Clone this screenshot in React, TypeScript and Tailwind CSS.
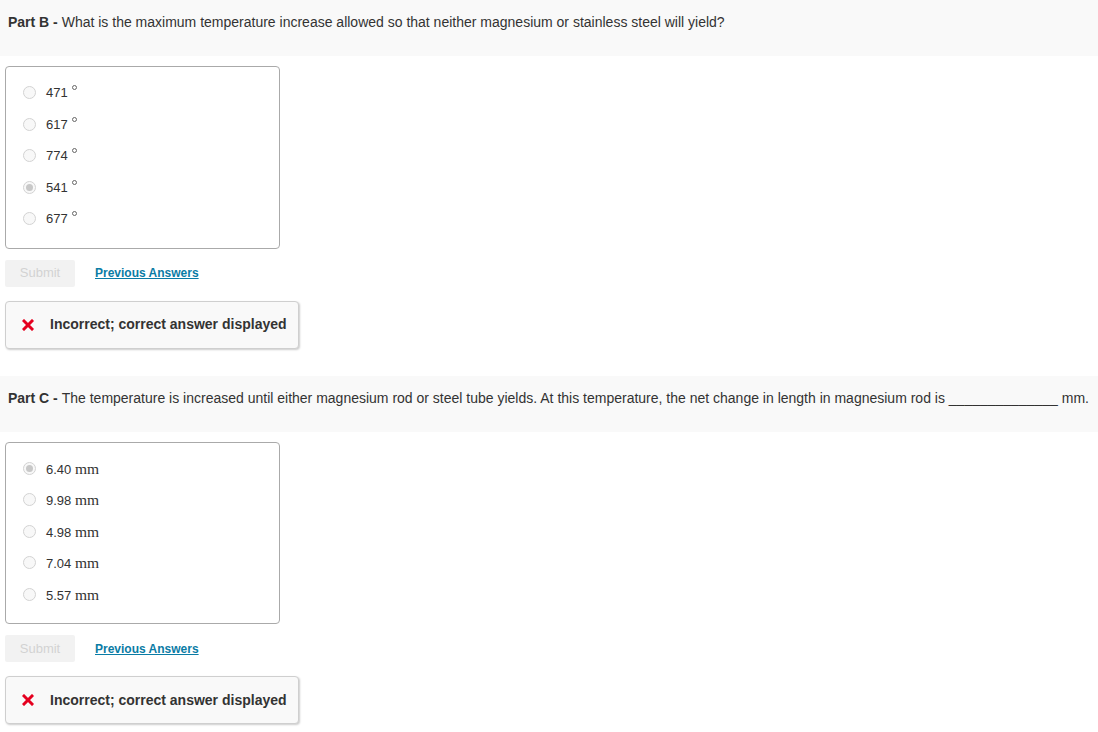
import React from "react";

type Part = {
  label: string;
  question: React.ReactNode;
  options: React.ReactNode[];
  selected: number;
};

function Radio({ checked }: { checked: boolean }) {
  return (
    <span className="flex h-[13px] w-[13px] items-center justify-center rounded-full border border-[#d3d3d3] bg-[#f8f8f8]">
      {checked && <span className="h-[7px] w-[7px] rounded-full bg-[#c8c8c8]" />}
    </span>
  );
}

function Degree({ value }: { value: string }) {
  return (
    <span className="flex items-start">
      {value}
      <span className="ml-[4px] mt-[2px] inline-block h-[5px] w-[5px] rounded-full border border-[#666]" />
    </span>
  );
}

function Mm({ value }: { value: string }) {
  return (
    <span>
      {value} <span className="font-['Liberation_Serif',serif] text-[15.5px]">mm</span>
    </span>
  );
}

function Feedback() {
  return (
    <div className="flex h-[48px] w-[294px] items-center rounded-[4px] border border-[#cfcfcf] bg-[#f9f9f9] pl-[16px] shadow-[1px_1px_2px_rgba(0,0,0,0.2)]">
      <svg width="12" height="12" viewBox="0 0 12 12" className="mr-[16px]">
        <path d="M2 2 L10 10 M10 2 L2 10" stroke="#e5001f" strokeWidth="3" strokeLinecap="square" />
      </svg>
      <span className="text-[14px] font-bold text-[#333]">Incorrect; correct answer displayed</span>
    </div>
  );
}

function Section({ part }: { part: Part }) {
  return (
    <section>
      <div className="h-[56px] whitespace-nowrap bg-[#f9f9f9] px-[8px] pt-[14px] text-[14px] leading-[16px] text-[#333]">
        <b className="font-bold">{part.label} - </b>
        {part.question}
      </div>
      <div className="px-[5px] pt-[10px]">
        <div className="w-[275px] rounded-[4px] border border-[#aaa] pb-[13px] pt-[10px]">
          {part.options.map((opt, i) => (
            <div key={i} className="flex h-[31.5px] items-center pl-[17px] text-[13px] text-[#333]">
              <Radio checked={i === part.selected} />
              <span className="ml-[10px]">{opt}</span>
            </div>
          ))}
        </div>
        <div className="mt-[11px] flex items-center">
          <span className="flex h-[27px] w-[70px] items-center justify-center rounded-[2px] bg-[#f2f2f2] text-[13px] text-[#d2d2d2]">
            Submit
          </span>
          <a className="ml-[20px] text-[12px] font-bold text-[#0a7ca5] underline">Previous Answers</a>
        </div>
        <div className="mt-[14px]">
          <Feedback />
        </div>
      </div>
    </section>
  );
}

const parts: Part[] = [
  {
    label: "Part B",
    question: "What is the maximum temperature increase allowed so that neither magnesium or stainless steel will yield?",
    options: ["471", "617", "774", "541", "677"].map((v) => <Degree value={v} />),
    selected: 3,
  },
  {
    label: "Part C",
    question:
      "The temperature is increased until either magnesium rod or steel tube yields. At this temperature, the net change in length in magnesium rod is ______________ mm.",
    options: ["6.40", "9.98", "4.98", "7.04", "5.57"].map((v) => <Mm value={v} />),
    selected: 0,
  },
];

export default function App() {
  return (
    <div className="min-h-screen bg-white font-['Liberation_Sans',Arial,sans-serif]">
      <Section part={parts[0]} />
      <div className="h-[27px]" />
      <Section part={parts[1]} />
    </div>
  );
}
